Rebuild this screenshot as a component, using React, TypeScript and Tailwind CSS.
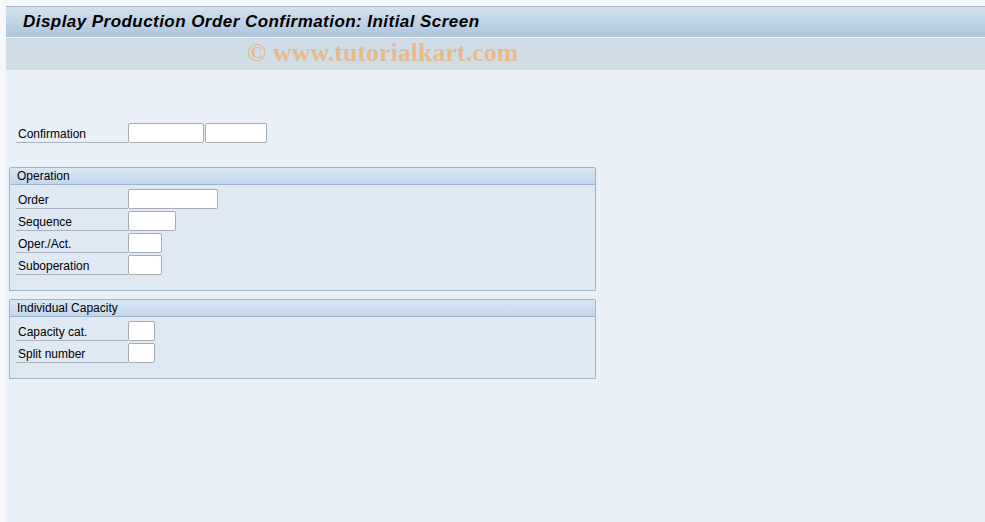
const font = { fontFamily: '"Liberation Sans", Arial, sans-serif' };

function Field({ label, widths }: { label: string; widths: number[] }) {
  return (
    <div className="flex items-end h-[20px]">
      <div className="w-[112px] h-[20px] border-b border-[#a9b3bf] pl-[2px] pt-[4px] text-[12px] leading-[14px] text-black">
        {label}
      </div>
      <div className="flex gap-[1px]">
        {widths.map((w, i) => (
          <div
            key={i}
            className={`h-[20px] bg-white border border-[#a8acb2] rounded-[2px] ${
              w === 76 ? "w-[76px]" : w === 62 ? "w-[62px]" : w === 90 ? "w-[90px]" : w === 48 ? "w-[48px]" : w === 34 ? "w-[34px]" : "w-[27px]"
            }`}
          />
        ))}
      </div>
    </div>
  );
}

function Group({ title, children, bodyH }: { title: string; children: React.ReactNode; bodyH: string }) {
  return (
    <div className="w-[587px] border border-[#9db4cd] rounded-t-[2px] bg-[#dfe9f4]">
      <div className="h-[17px] bg-gradient-to-b from-[#dbe7f3] to-[#c2d6ea] border-b border-[#9db4cd] pl-[7px] text-[12px] leading-[16px] text-black">
        {title}
      </div>
      <div className={`pl-[6px] pt-[4px] flex flex-col gap-[2px] ${bodyH}`}>{children}</div>
    </div>
  );
}

export default function App() {
  return (
    <div className="w-[985px] h-[522px] bg-[#f5f7fa] pt-[6px] pl-[6px] overflow-hidden" style={font}>
      <div className="h-[516px] bg-[#e9f0f8] flex flex-col">
        {/* title bar */}
        <div className="h-[31px] border-t border-[#a3b3c4] bg-gradient-to-b from-[#d2e1ed] to-[#aec5dc] flex items-center pl-[17px]">
          <span className="text-[17px] font-bold italic text-black tracking-[0.45px]" style={font}>
            Display Production Order Confirmation: Initial Screen
          </span>
        </div>
        {/* toolbar strip */}
        <div className="h-[34px] border-t border-[#eef3f8] border-b border-[#9fb0c3] bg-[#cfdde8] flex items-center pl-[241px] pb-[3px]">
          <span
            className="text-[26px] leading-[30px] font-bold text-[#e9b98a]"
            style={{ fontFamily: '"Liberation Serif", "Times New Roman", serif' }}
          >
            © www.tutorialkart.com
          </span>
        </div>

        <div className="pl-[10px] pt-[52px]">
          <Field label="Confirmation" widths={[76, 62]} />
        </div>

        <div className="pl-[3px] pt-[24px] flex flex-col gap-[8px]">
          <Group title="Operation" bodyH="h-[105px]">
            <Field label="Order" widths={[90]} />
            <Field label="Sequence" widths={[48]} />
            <Field label="Oper./Act." widths={[34]} />
            <Field label="Suboperation" widths={[34]} />
          </Group>
          <Group title="Individual Capacity" bodyH="h-[61px]">
            <Field label="Capacity cat." widths={[27]} />
            <Field label="Split number" widths={[27]} />
          </Group>
        </div>
      </div>
    </div>
  );
}
